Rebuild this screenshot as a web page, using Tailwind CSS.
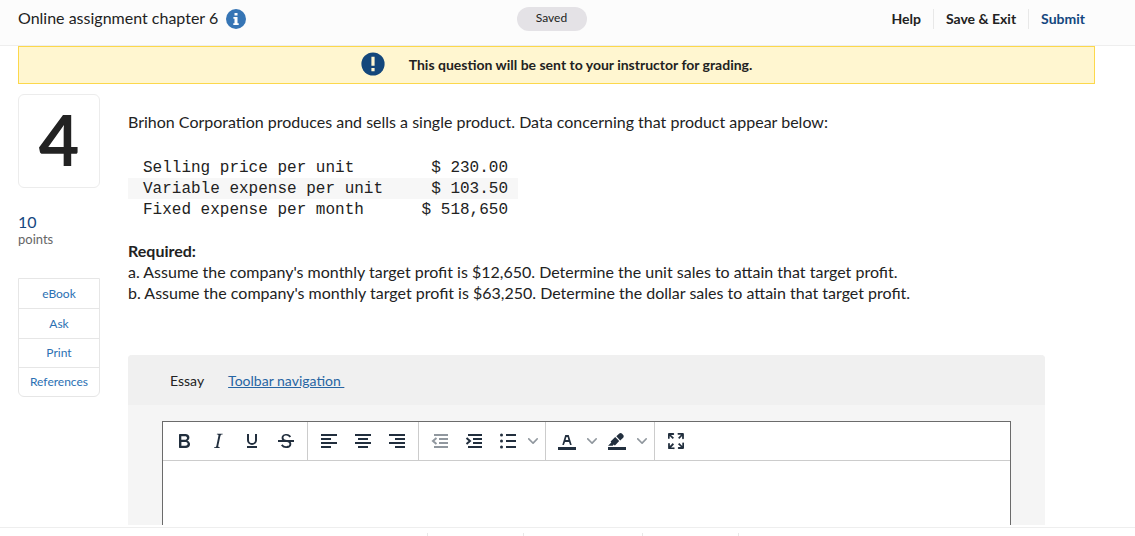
<!DOCTYPE html>
<html lang="en">
<head>
    <meta charset="UTF-8">
    <meta name="viewport" content="width=device-width, initial-scale=1.0">
    <title>Online assignment chapter 6</title>
    <script src="https://cdn.jsdelivr.net/npm/@tailwindcss/browser@4"></script>
</head>
<body class="h-screen flex flex-col overflow-hidden bg-white text-[#222] font-['Lato',sans-serif]">
    <header class="shrink-0 h-[46px] bg-[#fcfcfc] border-b border-[#eee] grid grid-cols-[1fr_auto_1fr] items-start pl-[18px] pr-[50px] pt-[7px]">
      <div class="flex items-center gap-2 h-6">
        <h1 class="text-[16px] leading-5 pb-[2px]">Online assignment chapter 6</h1>
        <button type="button" aria-label="Assignment information">
          <svg class="w-5 h-5" viewBox="0 0 20 20"><circle cx="10" cy="10" r="10" fill="#3675b5"/><path fill="#fff" d="M8.5 4h3v2.6h-3zM7.4 8h4.1v6.3h1.2V16H7.3v-1.7h1.2V9.7H7.4z"/></svg>
        </button>
      </div>
      <div class="h-6 w-[70px] rounded-full bg-[#e4e2e6] text-[12px] leading-[22px] text-center">Saved</div>
      <nav class="flex justify-end items-center h-6 text-[14px] font-bold">
        <a href="#" class="px-3 leading-5 border-r border-[#e8e8e8]">Help</a>
        <a href="#" class="px-3 leading-5 border-r border-[#e8e8e8]">Save &amp; Exit</a>
        <a href="#" class="pl-3 leading-5 text-[#14477f]">Submit</a>
      </nav>
    </header>

    <main class="flex-1 min-h-0 overflow-hidden pl-[18px] pr-10">
      <div class="h-[38px] border border-[#fcd84c] bg-[#fff6d0] pb-[2px] flex items-center justify-center gap-6 text-[14px] font-bold">
        <svg class="w-6 h-6" viewBox="0 0 24 24"><circle cx="12" cy="12" r="11.6" fill="#14477b"/><path fill="#fff6d0" d="M10.4 4.8h3.2v9h-3.2zM10.4 16h3.2v3.2h-3.2z"/></svg>
        <p>This question will be sent to your instructor for grading.</p>
      </div>

      <div class="flex gap-7 pt-[10px]">
        <aside class="w-[82px] shrink-0">
          <div class="h-[94px] border border-[#ececec] rounded-md pb-1 flex items-center justify-center text-[70px] font-bold">4</div>
          <div class="mt-[25px] text-[16px] leading-[18px] text-[#14477f]">10</div>
          <div class="text-[13px] leading-4 text-[#666]">points</div>
          <nav class="mt-[31px] border border-[#e6e6e6] rounded-b-md divide-y divide-[#e6e6e6] text-[12px] text-center text-[#2b70b3]">
            <a href="#" class="block leading-[29px]">eBook</a>
            <a href="#" class="block leading-[29px]">Ask</a>
            <a href="#" class="block leading-[28px]">Print</a>
            <a href="#" class="block leading-[28px]">References</a>
          </nav>
        </aside>

        <section class="flex-1 min-w-0 pt-[17px] pr-[50px] text-[16px] leading-[21px]">
          <p>Brihon Corporation produces and sells a single product. Data concerning that product appear below:</p>
          <table class="mt-[25px] w-[390px] leading-[19px] font-['Liberation_Mono',monospace]">
            <tbody>
              <tr><td class="pt-[2px] pl-[15px]">Selling price per unit</td><td class="pt-[2px] pr-[10px] text-right">$ 230.00</td></tr>
              <tr class="bg-[#f7f7f7]"><td class="pt-[2px] pl-[15px]">Variable expense per unit</td><td class="pt-[2px] pr-[10px] text-right">$ 103.50</td></tr>
              <tr><td class="pt-[2px] pl-[15px]">Fixed expense per month</td><td class="pt-[2px] pr-[10px] text-right">$ 518,650</td></tr>
            </tbody>
          </table>
          <p class="mt-5 font-bold">Required:</p>
          <p>a. Assume the company's monthly target profit is $12,650. Determine the unit sales to attain that target profit.</p>
          <p>b. Assume the company's monthly target profit is $63,250. Determine the dollar sales to attain that target profit.</p>

          <div class="mt-[52px] rounded-t-sm bg-[#f5f5f5]">
            <div class="h-[50px] bg-[#f0f0f0] rounded-t-sm flex items-center gap-6 pl-[42px] text-[14px]">
              <label for="essay">Essay</label>
              <a href="#" class="underline text-[#2765a3] whitespace-pre">Toolbar navigation </a>
            </div>
            <div class="px-[34px] pt-4">
              <div class="border border-[#6b6b6b] bg-white">
                <div class="h-[39px] border-b border-[#ccc] flex text-[#222f3e]">
                  <div class="flex items-center px-1 border-r border-[#ccc]">
                    <button type="button" aria-label="Bold" class="w-[34px] flex justify-center"><svg class="w-6 h-6" viewBox="0 0 24 24" fill="currentColor"><path fill-rule="evenodd" d="M7.8 19c-.3 0-.5 0-.6-.2l-.2-.5V5.7c0-.2 0-.4.2-.5l.6-.2h5c1.5 0 2.7.3 3.5 1 .7.6 1.1 1.4 1.1 2.5a3 3 0 0 1-.6 1.9c-.4.6-1 1-1.6 1.2.4.1.9.3 1.3.6s.8.7 1 1.2c.4.4.5 1 .5 1.6 0 1.3-.4 2.3-1.3 3-.8.7-2.1 1-3.8 1H7.8zm5-8.3c.6 0 1.2-.1 1.6-.5.4-.3.6-.7.6-1.3 0-1.1-.8-1.7-2.3-1.7H9.3v3.5h3.4zm.5 6c.7 0 1.3-.1 1.7-.4.4-.4.6-.9.6-1.5s-.2-1-.7-1.4c-.4-.3-1-.4-2-.4H9.4v3.8h4z"/></svg></button>
                    <button type="button" aria-label="Italic" class="w-[34px] flex justify-center"><svg class="w-6 h-6" viewBox="0 0 24 24" fill="currentColor"><path d="M16.7 4.7l-.1.9h-.3c-.6 0-1 0-1.4.3-.3.3-.4.6-.5 1.1l-2.1 9.8v.6c0 .5.4.8 1.4.8h.2l-.2.8H8l.2-.8h.2c1.1 0 1.8-.5 2-1.5l2-9.8.1-.5c0-.6-.4-.8-1.4-.8h-.3l.2-.9h5.7z"/></svg></button>
                    <button type="button" aria-label="Underline" class="w-[34px] flex justify-center"><svg class="w-6 h-6" viewBox="0 0 24 24" fill="none" stroke="currentColor" stroke-width="2"><path d="M8 5v6.2a4 3.8 0 0 0 8 0V5M7 18h10"/></svg></button>
                    <button type="button" aria-label="Strikethrough" class="w-[34px] flex justify-center"><svg class="w-6 h-6" viewBox="0 0 24 24" fill="currentColor"><path d="M15.6 8.5c-.5-.7-1-1.1-1.3-1.3-.6-.4-1.3-.6-2-.6-2.7 0-2.8 1.7-2.8 2.1 0 1.6 1.8 2 3.2 2.3 4.4.9 4.6 2.8 4.6 3.9 0 1.4-.7 4.1-5 4.1A6.2 6.2 0 0 1 7 16.4l1.5-1.1c.4.6 1.6 2 3.7 2 1.6 0 2.5-.4 3-1.2.4-.8.3-2-.8-2.6-.7-.4-1.6-.7-2.9-1-1-.2-3.9-.8-3.9-3.6C7.6 6 10.3 5 12.4 5c2.9 0 4.2 1.6 4.7 2.4l-1.5 1.1zM4 11h16v2H4z"/></svg></button>
                  </div>
                  <div class="flex items-center px-1 border-r border-[#ccc]">
                    <button type="button" aria-label="Align left" class="w-[34px] flex justify-center"><svg class="w-6 h-6" viewBox="0 0 24 24" fill="currentColor"><path d="M4 5h16v2H4zM4 9h10v2H4zM4 13h16v2H4zM4 17h10v2H4z"/></svg></button>
                    <button type="button" aria-label="Align center" class="w-[34px] flex justify-center"><svg class="w-6 h-6" viewBox="0 0 24 24" fill="currentColor"><path d="M4 5h16v2H4zM7 9h10v2H7zM4 13h16v2H4zM7 17h10v2H7z"/></svg></button>
                    <button type="button" aria-label="Align right" class="w-[34px] flex justify-center"><svg class="w-6 h-6" viewBox="0 0 24 24" fill="currentColor"><path d="M4 5h16v2H4zM10 9h10v2H10zM4 13h16v2H4zM10 17h10v2H10z"/></svg></button>
                  </div>
                  <div class="flex items-center px-1 border-r border-[#ccc]">
                    <button type="button" aria-label="Decrease indent" disabled class="w-[34px] flex justify-center text-[#222f3e]/50"><svg class="w-6 h-6" viewBox="0 0 24 24" fill="currentColor"><path d="M6 5h14v2H6zM11 9h9v2h-9zM11 13h9v2h-9zM6 17h14v2H6z"/><path fill="none" stroke="currentColor" stroke-width="2" d="M8.5 9L5 12l3.5 3"/></svg></button>
                    <button type="button" aria-label="Increase indent" class="w-[34px] flex justify-center"><svg class="w-6 h-6" viewBox="0 0 24 24" fill="currentColor"><path d="M6 5h14v2H6zM11 9h9v2h-9zM11 13h9v2h-9zM6 17h14v2H6z"/><path fill="none" stroke="currentColor" stroke-width="2" d="M4.5 9L8 12l-3.5 3"/></svg></button>
                    <button type="button" aria-label="Bullet list" class="w-[34px] flex justify-center"><svg class="w-6 h-6" viewBox="0 0 24 24" fill="currentColor"><path d="M10 5h10v2H10zM10 11h10v2H10zM10 17h10v2H10z"/><circle cx="5.5" cy="6" r="1.5"/><circle cx="5.5" cy="12" r="1.5"/><circle cx="5.5" cy="18" r="1.5"/></svg></button>
                    <button type="button" aria-label="Bullet list options" class="w-4 flex justify-center text-[#222f3e]/50"><svg class="w-[10px] h-[10px]" viewBox="0 0 10 10" fill="currentColor"><path d="M8.7 2.2c.3-.3.8-.3 1 0 .4.4.4.9 0 1.2L5.7 7.8c-.3.3-.9.3-1.2 0L.2 3.4a.8.8 0 0 1 0-1.2c.3-.3.8-.3 1.1 0L5 6l3.7-3.8z"/></svg></button>
                  </div>
                  <div class="flex items-center px-1 border-r border-[#ccc]">
                    <button type="button" aria-label="Text color" class="w-[34px] flex justify-center"><svg class="w-6 h-6" viewBox="0 0 24 24" fill="currentColor"><path d="M3 18h18v3H3z"/><path fill-rule="evenodd" d="M8.7 16h-.8a.5.5 0 0 1-.5-.6l2.7-9c.1-.3.3-.4.5-.4h2.8c.2 0 .4.1.5.4l2.7 9a.5.5 0 0 1-.5.6h-.8a.5.5 0 0 1-.4-.4l-.7-2.2c0-.3-.3-.4-.5-.4h-3.4c-.2 0-.4.1-.5.4l-.7 2.2c0 .3-.2.4-.4.4zm2.6-7.6l-.6 2a.5.5 0 0 0 .5.6h1.6a.5.5 0 0 0 .5-.6l-.6-2c0-.3-.3-.4-.5-.4h-.4c-.2 0-.4.1-.5.4z"/></svg></button>
                    <button type="button" aria-label="Text color options" class="w-4 flex justify-center text-[#222f3e]/50"><svg class="w-[10px] h-[10px]" viewBox="0 0 10 10" fill="currentColor"><path d="M8.7 2.2c.3-.3.8-.3 1 0 .4.4.4.9 0 1.2L5.7 7.8c-.3.3-.9.3-1.2 0L.2 3.4a.8.8 0 0 1 0-1.2c.3-.3.8-.3 1.1 0L5 6l3.7-3.8z"/></svg></button>
                    <button type="button" aria-label="Background color" class="w-[34px] flex justify-center"><svg class="w-6 h-6" viewBox="0 0 24 24" fill="currentColor"><path d="M3 18h18v3H3z"/><path d="M7.7 16.7H3l3.3-3.3-.7-.8L10.2 8l4 4.1-4 4.2c-.2.2-.6.2-.8 0l-.6-.7-1.1 1.1zm3.6-9.4l3-2.8a2 2 0 0 1 2.6 0L18.2 6c.7.7.7 2 0 2.7l-3 2.8z"/></svg></button>
                    <button type="button" aria-label="Background color options" class="w-4 flex justify-center text-[#222f3e]/50"><svg class="w-[10px] h-[10px]" viewBox="0 0 10 10" fill="currentColor"><path d="M8.7 2.2c.3-.3.8-.3 1 0 .4.4.4.9 0 1.2L5.7 7.8c-.3.3-.9.3-1.2 0L.2 3.4a.8.8 0 0 1 0-1.2c.3-.3.8-.3 1.1 0L5 6l3.7-3.8z"/></svg></button>
                  </div>
                  <div class="flex items-center px-1">
                    <button type="button" aria-label="Fullscreen" class="w-[34px] flex justify-center"><svg class="w-6 h-6" viewBox="0 0 24 24" fill="currentColor"><path d="M15.3 10l-1.2-1.3 2.9-3h-2.3a.9.9 0 1 1 0-1.7H19c.5 0 .9.4.9.9v4.4a.9.9 0 1 1-1.8 0V7l-2.8 3zm0 4l3 3v-2.3a.9.9 0 1 1 1.7 0V19c0 .5-.4.9-.9.9h-4.4a.9.9 0 1 1 0-1.8H17l-3-2.9 1.3-1.2zM10 15.4l-2.9 3h2.3a.9.9 0 1 1 0 1.7H5a.9.9 0 0 1-.9-.9v-4.4a.9.9 0 1 1 1.8 0V17l2.9-3 1.2 1.4zM8.7 10L5.7 7v2.3a.9.9 0 0 1-1.7 0V5c0-.5.4-.9.9-.9h4.4a.9.9 0 0 1 0 1.8H7l3 2.9L8.7 10z"/></svg></button>
                  </div>
                </div>
                <textarea id="essay" class="block w-full h-40 p-3 resize-none outline-none"></textarea>
              </div>
            </div>
          </div>
        </section>
      </div>
    </main>

    <footer class="shrink-0 pt-[2px] bg-white">
      <div class="h-[9px] border-t border-[#eee] pt-[5px] pl-[30px] flex justify-center">
        <div class="w-[312px] flex border-x border-[#e8e8e8]">
          <div class="w-[96px] border-r border-[#e8e8e8]"></div>
          <div class="w-[119px] border-r border-[#e8e8e8]"></div>
        </div>
      </div>
    </footer>
</body>
</html>
